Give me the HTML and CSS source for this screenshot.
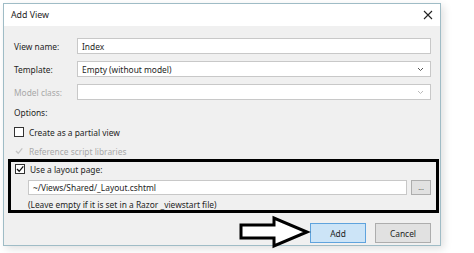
FILE: index.html
```html
<html>

<head>
  <title>Add View</title>
  <link rel="stylesheet" href="styles.css">
</head>

<body>

  <div class="window">
    <header class="titlebar">
      <span>Add View</span>
      <svg class="close" width="10" height="10" viewBox="0 0 10 10">
        <path d="M1 1 L9 9 M9 1 L1 9" stroke="#222" stroke-width="1.1" fill="none" />
      </svg>
    </header>

    <main class="content">
      <div class="fields">
        <label>View name:</label>
        <div class="field">Index</div>

        <label>Template:</label>
        <div class="field select">
          Empty (without model)
          <svg class="chev" width="7" height="5" viewBox="0 0 7 5"><path d="M1 1 L3.5 3.5 L6 1" stroke="#555" fill="none" /></svg>
        </div>

        <label class="disabled">Model class:</label>
        <div class="field select">
          <svg class="chev" width="7" height="5" viewBox="0 0 7 5"><path d="M1 1 L3.5 3.5 L6 1" stroke="#bbb" fill="none" /></svg>
        </div>
      </div>

      <div class="options-title">Options:</div>

      <div class="check-row">
        <span class="box"></span>
        Create as a partial view
      </div>

      <div class="check-row disabled">
        <span class="box blank">
          <svg width="10" height="10" viewBox="0 0 10 10"><path d="M2 5 L4.2 7.3 L8.3 2.4" stroke="#c4c4c4" stroke-width="1.3" fill="none" /></svg>
        </span>
        Reference script libraries
      </div>

      <section class="layout-box">
        <div class="check-row">
          <span class="box">
            <svg width="10" height="10" viewBox="0 0 10 10"><path d="M2 5 L4.2 7.3 L8.3 2.4" stroke="#111" stroke-width="1.3" fill="none" /></svg>
          </span>
          Use a layout page:
        </div>
        <div class="path-row">
          <div class="field">~/Views/Shared/_Layout.cshtml</div>
          <button class="browse">...</button>
        </div>
        <div class="hint">(Leave empty if it is set in a Razor _viewstart file)</div>
      </section>

      <footer class="buttons">
        <button class="btn primary">Add</button>
        <button class="btn">Cancel</button>
      </footer>
    </main>
  </div>

  <svg class="arrow" width="74" height="34" viewBox="0 0 74 34">
    <path d="M3 10 L36 10 L36 3 L69 17 L36 31 L36 23 L3 23 Z" fill="#fff" stroke="#000" stroke-width="3" stroke-linejoin="miter" />
  </svg>

</body>

</html>
```

FILE: styles.css
```css
body {
  margin: 0;
  background: #fff;
  position: relative;
  font-family: "Noto Sans", "Open Sans", sans-serif;
  font-size: 8.4px;
  color: #1e1e1e;
}

.window {
  margin: 3px 0 0 3px;
  width: 438px;
  height: 243px;
  box-sizing: border-box;
  border: 1px solid #9fbcc6;
  box-shadow: 3px 3px 8px rgba(0, 0, 0, 0.12);
  display: flex;
  flex-direction: column;
}

.titlebar {
  height: 22px;
  background: #fff;
  display: flex;
  align-items: center;
  justify-content: space-between;
  padding: 0 7px 0 7px;
  font-size: 8.8px;
}

.content {
  flex: 1;
  background: #f0f0f0;
  padding: 12px 9px 0 10px;
  display: flex;
  flex-direction: column;
}

.fields {
  display: grid;
  grid-template-columns: 63px 1fr;
  grid-auto-rows: 16px;
  row-gap: 7px;
  align-items: center;
}

.disabled {
  color: #a8a8a8;
}

.field {
  height: 16px;
  box-sizing: border-box;
  border: 1px solid #c8c8c8;
  background: #fff;
  padding: 0 4px;
  display: flex;
  align-items: center;
  position: relative;
}

.select .chev {
  position: absolute;
  right: 6px;
  top: 5px;
}

.options-title {
  margin-top: 6px;
  height: 14px;
  line-height: 14px;
}

.check-row {
  margin-top: 5px;
  height: 14px;
  display: flex;
  align-items: center;
  gap: 5px;
}

.box {
  width: 10px;
  height: 10px;
  box-sizing: border-box;
  border: 1px solid #333;
  background: #fff;
  display: flex;
  align-items: center;
  justify-content: center;
}

.box svg {
  flex: none;
}

.box.blank {
  border-color: transparent;
  background: transparent;
}

.layout-box {
  margin: 1px -8px 0 -6px;
  border: 3px solid #000;
  padding: 0 5px 0 4px;
  height: 54px;
  box-sizing: border-box;
}

.layout-box .check-row {
  margin-top: 0;
}

.path-row {
  display: flex;
  gap: 4px;
  margin: 4px 0 0 13px;
}

.path-row .field {
  flex: 1;
  height: 15px;
}

.browse {
  width: 20px;
  height: 15px;
  border: 1px solid #adadad;
  background: #e1e1e1;
  font: inherit;
  font-size: 7px;
  color: #555;
  padding: 0;
}

.hint {
  margin: 3px 0 0 13px;
  height: 13px;
  line-height: 13px;
}

.buttons {
  margin-top: 10px;
  display: flex;
  justify-content: flex-end;
  gap: 9px;
}

.btn {
  width: 56px;
  height: 20px;
  box-sizing: border-box;
  border: 1px solid #adadad;
  background: #e1e1e1;
  font: inherit;
  color: #1e1e1e;
  padding: 0;
}

.btn.primary {
  background: #cce4f7;
  border-color: #5fa3dd;
}

.arrow {
  position: absolute;
  left: 238px;
  top: 215px;
}
```
